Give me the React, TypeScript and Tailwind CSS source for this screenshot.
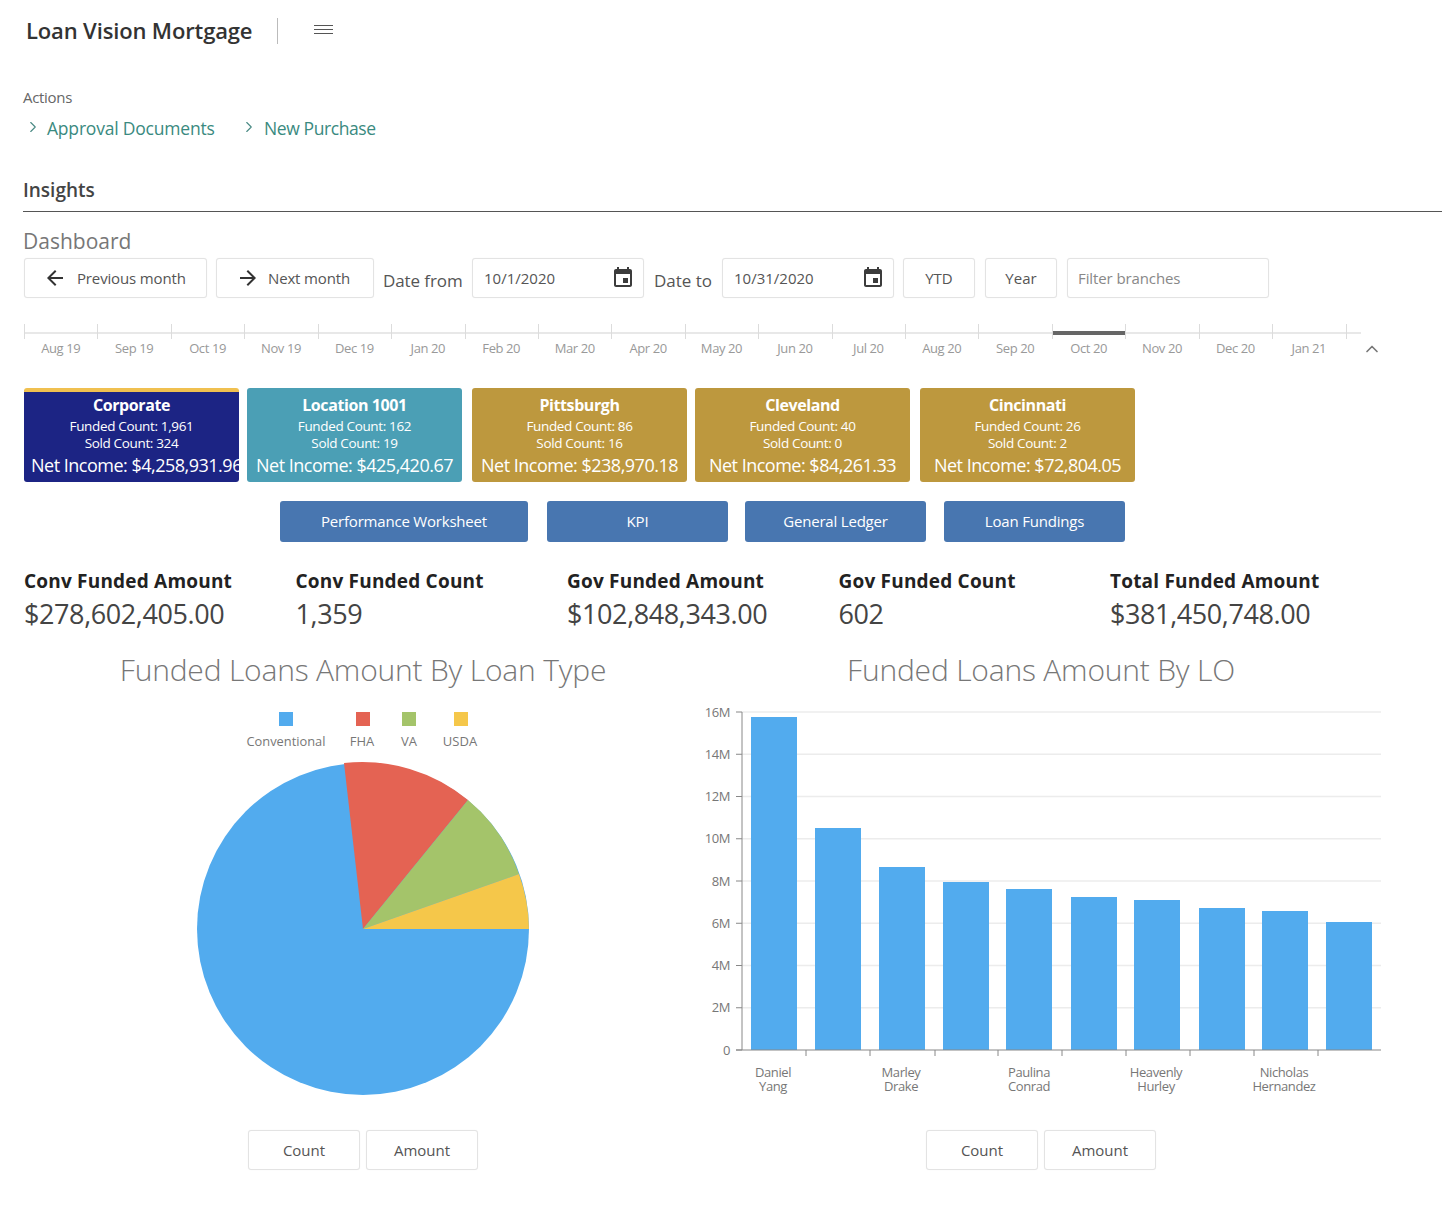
import React from "react";
import { ChevronRight, ChevronUp } from "lucide-react";

const months = ["Aug 19", "Sep 19", "Oct 19", "Nov 19", "Dec 19", "Jan 20", "Feb 20", "Mar 20", "Apr 20", "May 20", "Jun 20", "Jul 20", "Aug 20", "Sep 20", "Oct 20", "Nov 20", "Dec 20", "Jan 21"];

const branches = [
  { name: "Corporate", funded: "1,961", sold: "324", net: "$4,258,931.96", bg: "bg-[#1c2484] border-t-4 border-t-[#f0c050] pt-[3px]", gap: "", justify: "justify-start" },
  { name: "Location 1001", funded: "162", sold: "19", net: "$425,420.67", bg: "bg-[#4b9fb5] pt-[7px]", gap: "ml-[8px]", justify: "justify-center" },
  { name: "Pittsburgh", funded: "86", sold: "16", net: "$238,970.18", bg: "bg-[#bd983e] pt-[7px]", gap: "ml-[10px]", justify: "justify-center" },
  { name: "Cleveland", funded: "40", sold: "0", net: "$84,261.33", bg: "bg-[#bd983e] pt-[7px]", gap: "ml-[8px]", justify: "justify-center" },
  { name: "Cincinnati", funded: "26", sold: "2", net: "$72,804.05", bg: "bg-[#bd983e] pt-[7px]", gap: "ml-[10px]", justify: "justify-center" },
];

const metrics = [
  { label: "Conv Funded Amount", value: "$278,602,405.00" },
  { label: "Conv Funded Count", value: "1,359" },
  { label: "Gov Funded Amount", value: "$102,848,343.00" },
  { label: "Gov Funded Count", value: "602" },
  { label: "Total Funded Amount", value: "$381,450,748.00" },
];

const Calendar = () => (
  <svg width="24" height="24" viewBox="0 0 24 24" fill="#3c3c3c">
    <path d="M17 12h-5v5h5v-5zM16 1v2H8V1H6v2H5c-1.11 0-1.99.9-1.99 2L3 19c0 1.1.89 2 2 2h14c1.1 0 2-.9 2-2V5c0-1.1-.9-2-2-2h-1V1h-2zm3 18H5V8h14v11z" />
  </svg>
);

const ArrowBack = () => (
  <svg width="24" height="24" viewBox="0 0 24 24" fill="#333">
    <path d="M20 11H7.83l5.59-5.59L12 4l-8 8 8 8 1.41-1.41L7.83 13H20v-2z" />
  </svg>
);

const ArrowForward = () => (
  <svg width="24" height="24" viewBox="0 0 24 24" fill="#333">
    <path d="M12 4l-1.41 1.41L16.17 11H4v2h12.17l-5.58 5.59L12 20l8-8z" />
  </svg>
);

const box = "h-10 bg-white border border-[#e3e3e3] rounded-[3px] flex items-center text-[15px] text-[#555] shadow-[0_0_1px_rgba(0,0,0,0.08)]";

const DateInput = ({ value }: { value: string }) => (
  <div className={`${box} w-[172px] pl-[11px] pr-[8px] justify-between`}>
    <span>{value}</span>
    <Calendar />
  </div>
);

const ToggleButtons = () => (
  <div className="mt-[30px] flex gap-[6px] justify-center">
    <div className={`${box} w-[112px] justify-center`}>Count</div>
    <div className={`${box} w-[112px] justify-center`}>Amount</div>
  </div>
);

const PieChart = () => (
  <svg width="678" height="400" viewBox="0 0 678 400" className="block">
    <g transform="translate(0 2)">
      <rect x="255" y="10" width="14" height="14" fill="#52abee" />
      <rect x="332" y="10" width="14" height="14" fill="#e46353" />
      <rect x="378" y="10" width="14" height="14" fill="#a4c46a" />
      <rect x="430" y="10" width="14" height="14" fill="#f5c74a" />
      <g fontSize="13" fill="#777" textAnchor="middle" fontFamily="'Open Sans', sans-serif">
        <text x="262" y="44" textLength="79" lengthAdjust="spacingAndGlyphs">Conventional</text>
        <text x="338" y="44">FHA</text>
        <text x="385" y="44">VA</text>
        <text x="436" y="44">USDA</text>
      </g>
      <circle cx="339" cy="227" r="166" fill="#52abee" />
      <path d="M339 227 L320 61 A166 166 0 0 1 444 98 Z" fill="#e46353" />
      <path d="M339 227 L444 98 A166 166 0 0 1 495 172 Z" fill="#a4c46a" />
      <path d="M339 227 L495 172 A166 166 0 0 1 505 227 Z" fill="#f5c74a" />
    </g>
  </svg>
);

const bars = [
  { x: 751, top: 717 },
  { x: 815, top: 828 },
  { x: 879, top: 867 },
  { x: 943, top: 882 },
  { x: 1006, top: 889 },
  { x: 1071, top: 897 },
  { x: 1134, top: 900 },
  { x: 1199, top: 908 },
  { x: 1262, top: 911 },
  { x: 1326, top: 922 },
];

const yTicks = ["16M", "14M", "12M", "10M", "8M", "6M", "4M", "2M", "0"];
const xTicks = [806, 870, 935, 998, 1062, 1126, 1190, 1254, 1318];
const names = [
  { x: 773, a: "Daniel", b: "Yang" },
  { x: 901, a: "Marley", b: "Drake" },
  { x: 1029, a: "Paulina", b: "Conrad" },
  { x: 1156, a: "Heavenly", b: "Hurley" },
  { x: 1284, a: "Nicholas", b: "Hernandez" },
];

// the svg is offset so page coordinates can be used directly
const BarChart = () => (
  <svg width="678" height="400" viewBox="702 700 678 400" className="block overflow-visible">
    {yTicks.map((t, i) => {
      const y = 712 + i * 42.25;
      return (
        <g key={t}>
          {i < 8 && <line x1="742" x2="1381" y1={y} y2={y} stroke="#ececec" strokeWidth="1.5" />}
          <line x1="736" x2="742" y1={y} y2={y} stroke="#888" />
          <text x="730" y={y + 4.5} fontSize="13" fill="#777" textAnchor="end" fontFamily="'Open Sans', sans-serif" letterSpacing="-0.4">{t}</text>
        </g>
      );
    })}
    {bars.map((b) => (
      <rect key={b.x} x={b.x} y={b.top} width="46" height={1050 - b.top} fill="#52abee" />
    ))}
    <line x1="742" x2="742" y1="712" y2="1050" stroke="#888" />
    <line x1="736" x2="1381" y1="1050" y2="1050" stroke="#888" />
    {xTicks.map((x) => (
      <line key={x} x1={x} x2={x} y1="1050" y2="1056" stroke="#888" />
    ))}
    <g fontSize="13" fill="#777" textAnchor="middle" fontFamily="'Open Sans', sans-serif" letterSpacing="-0.4">
      {names.map((n) => (
        <g key={n.x}>
          <text x={n.x} y="1077">{n.a}</text>
          <text x={n.x} y="1091">{n.b}</text>
        </g>
      ))}
    </g>
  </svg>
);

export default function App() {
  return (
    <div className="w-[1442px] h-[1218px] bg-white overflow-hidden font-['Open_Sans',sans-serif] text-[#333]">
      {/* top bar */}
      <div className="h-[62px] flex items-center pl-[26px]">
        <span className="text-[22px] font-semibold text-[#333] tracking-[-0.15px] w-[251px] whitespace-nowrap -mt-[2px]">Loan Vision Mortgage</span>
        <div className="w-px h-[26px] bg-[#bbb]" />
        <div className="ml-[36px] w-[19px] flex flex-col gap-[3px] -mt-[3px]">
          <div className="h-px bg-[#555]" />
          <div className="h-px bg-[#555]" />
          <div className="h-px bg-[#555]" />
        </div>
      </div>

      <div className="pl-[23px]">
        <div className="mt-[25px] text-[15px] leading-5 text-[#666] tracking-[-0.3px]">Actions</div>
        <div className="mt-[9px] flex items-center h-[25px] text-[#3a8a80] text-[17.5px] tracking-[-0.4px] whitespace-nowrap">
          <ChevronRight size={18} strokeWidth={1.5} className="text-[#4a8a84] ml-[1px] -mt-[4px]" />
          <span className="ml-[5px] w-[193px] tracking-[-0.2px]">Approval Documents</span>
          <ChevronRight size={18} strokeWidth={1.5} className="text-[#4a8a84] -mt-[4px]" />
          <span className="ml-[6px]">New Purchase</span>
        </div>

        <div className="mt-[36px] pb-[7px] border-b border-[#555] h-[35px] text-[19px] leading-[26px] font-semibold text-[#444]">Insights</div>
        <div className="mt-[14px] h-[32px] text-[21px] leading-[30px] text-[#777]">Dashboard</div>

        {/* filter row */}
        <div className="flex items-center pl-px h-10 whitespace-nowrap">
          <div className={`${box} w-[183px] pl-[18px]`}>
            <ArrowBack />
            <span className="ml-[10px] tracking-[-0.15px]">Previous month</span>
          </div>
          <div className={`${box} w-[158px] ml-[9px] pl-[19px]`}>
            <ArrowForward />
            <span className="ml-[8px] tracking-[-0.15px]">Next month</span>
          </div>
          <span className="ml-[9px] w-[89px] text-[17px] text-[#555] tracking-[-0.1px] mt-[6px]">Date from</span>
          <DateInput value="10/1/2020" />
          <span className="ml-[10px] w-[68px] text-[17px] text-[#555] mt-[6px]">Date to</span>
          <DateInput value="10/31/2020" />
          <div className={`${box} w-[72px] ml-[9px] justify-center`}>YTD</div>
          <div className={`${box} w-[72px] ml-[10px] justify-center`}>Year</div>
          <div className={`${box} w-[202px] ml-[10px] pl-[10px] text-[#888] tracking-[-0.1px]`}>Filter branches</div>
        </div>

        {/* month timeline */}
        <div className="mt-[26px] ml-px">
          <div className="flex h-[15px]">
            {months.map((m) => (
              <div key={m} className="w-[73.43px] h-[15px] border-l border-[#dcdcdc] flex flex-col justify-start">
                {m === "Oct 20" ? (
                  <div className="mt-[7px] h-[4px] bg-[#666]" />
                ) : (
                  <div className="mt-[8px] h-[2px] bg-[#e8e8e8]" />
                )}
              </div>
            ))}
            <div className="w-[15px] border-l border-[#dcdcdc]">
              <div className="mt-[8px] h-[2px] bg-[#e8e8e8]" />
            </div>
          </div>
          <div className="flex items-center h-[20px]">
            {months.map((m) => (
              <div key={m} className="w-[73.43px] text-center text-[13px] text-[#999] tracking-[-0.4px]">{m}</div>
            ))}
            <ChevronUp size={20} strokeWidth={2} className="ml-[16px] text-[#777]" />
          </div>
        </div>

        {/* branch cards */}
        <div className="mt-[29px] ml-px flex h-[94px] text-white">
          {branches.map((b) => (
            <div key={b.name} className={`${b.bg} ${b.gap} w-[215px] rounded-[3px] overflow-hidden flex flex-col items-center`}>
              <div className="text-[16px] leading-[20px] font-bold tracking-[-0.4px]">{b.name}</div>
              <div className="text-[13.5px] leading-[17px] tracking-[-0.35px] mt-[3px]">Funded Count: {b.funded}</div>
              <div className="text-[13.5px] leading-[17px] tracking-[-0.35px]">Sold Count: {b.sold}</div>
              <div className={`text-[18px] leading-[26px] tracking-[-0.5px] whitespace-nowrap w-full flex px-[7px] ${b.justify}`}>Net Income: {b.net}</div>
            </div>
          ))}
        </div>

        {/* report buttons */}
        <div className="mt-[19px] flex h-[41px] pl-[257px] text-white text-[15px] tracking-[-0.2px]">
          <div className="w-[248px] bg-[#4876b0] rounded-[3px] flex items-center justify-center">Performance Worksheet</div>
          <div className="w-[181px] ml-[19px] bg-[#4876b0] rounded-[3px] flex items-center justify-center">KPI</div>
          <div className="w-[181px] ml-[17px] bg-[#4876b0] rounded-[3px] flex items-center justify-center">General Ledger</div>
          <div className="w-[181px] ml-[18px] bg-[#4876b0] rounded-[3px] flex items-center justify-center">Loan Fundings</div>
        </div>

        {/* metrics */}
        <div className="mt-[26px] ml-px grid grid-cols-[271.5px_271.5px_271.5px_271.5px_300px]">
          {metrics.map((m) => (
            <div key={m.label}>
              <div className="text-[19px] leading-[26px] font-bold text-[#222] whitespace-nowrap tracking-[0.2px]">{m.label}</div>
              <div className="text-[27px] leading-[38px] mt-[1px] text-[#444] tracking-[-0.4px] whitespace-nowrap">{m.value}</div>
            </div>
          ))}
        </div>

        {/* charts */}
        <div className="mt-[15px] ml-px grid grid-cols-[678px_678px]">
          <div>
            <div className="h-[44px] text-center text-[30px] leading-[44px] font-light text-[#777] tracking-[-0.2px]">Funded Loans Amount By Loan Type</div>
            <div className="h-[400px] mt-[8px]">
              <PieChart />
            </div>
            <ToggleButtons />
          </div>
          <div>
            <div className="h-[44px] text-center text-[30px] leading-[44px] font-light text-[#777] tracking-[-0.2px]">Funded Loans Amount By LO</div>
            <div className="h-[400px] mt-[8px]">
              <BarChart />
            </div>
            <ToggleButtons />
          </div>
        </div>
      </div>
    </div>
  );
}
